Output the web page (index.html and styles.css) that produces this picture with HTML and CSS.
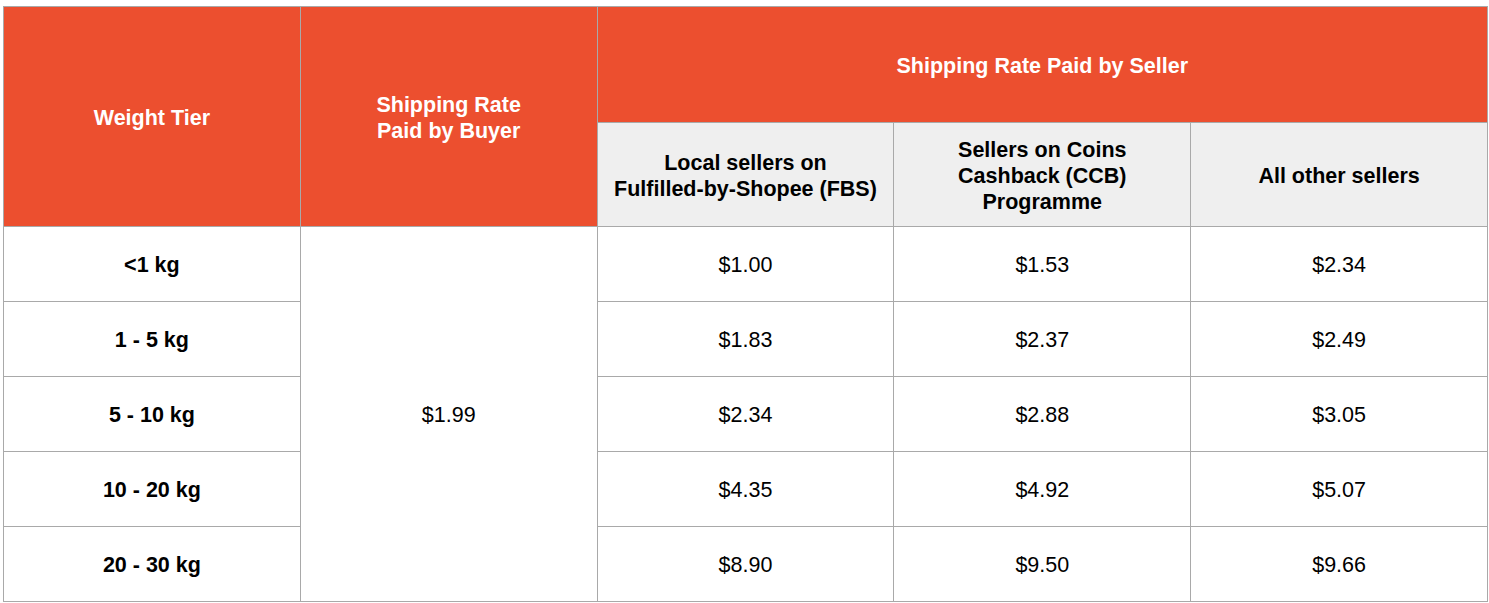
FILE: index.html
```html
<!DOCTYPE html>
<html>
<head>
<meta charset="utf-8">
<link rel="stylesheet" href="styles.css">
</head>
<body>
<table class="rates">
  <colgroup>
    <col class="c"><col class="c"><col class="c"><col class="c"><col class="c">
  </colgroup>
  <thead>
    <tr class="h1">
      <th rowspan="2" class="red">Weight Tier</th>
      <th rowspan="2" class="red">Shipping Rate<br>Paid by Buyer</th>
      <th colspan="3" class="red">Shipping Rate Paid by Seller</th>
    </tr>
    <tr class="h2">
      <th class="grey">Local sellers on<br>Fulfilled-by-Shopee (FBS)</th>
      <th class="grey">Sellers on Coins<br>Cashback (CCB)<br>Programme</th>
      <th class="grey">All other sellers</th>
    </tr>
  </thead>
  <tbody>
    <tr><td class="tier">&lt;1 kg</td><td rowspan="5">$1.99</td><td>$1.00</td><td>$1.53</td><td>$2.34</td></tr>
    <tr><td class="tier">1 - 5 kg</td><td>$1.83</td><td>$2.37</td><td>$2.49</td></tr>
    <tr><td class="tier">5 - 10 kg</td><td>$2.34</td><td>$2.88</td><td>$3.05</td></tr>
    <tr><td class="tier">10 - 20 kg</td><td>$4.35</td><td>$4.92</td><td>$5.07</td></tr>
    <tr><td class="tier">20 - 30 kg</td><td>$8.90</td><td>$9.50</td><td>$9.66</td></tr>
  </tbody>
</table>
</body>
</html>
```
FILE: styles.css
```css
html, body {
  margin: 0;
  padding: 0;
  background: #ffffff;
}
body {
  padding: 6px 0 0 3px;
  font-family: "Liberation Sans", Arial, sans-serif;
}
.rates {
  border-collapse: collapse;
  table-layout: fixed;
  width: 1485px;
  font-size: 21.5px;
  line-height: 26px;
  color: #000;
}
.rates th, .rates td {
  border: 1px solid #a9a9a9;
  text-align: center;
  vertical-align: middle;
  padding: 2px 8px 0 8px;
}
.rates th {
  font-weight: bold;
}
.red {
  background: #ec4f2f;
  color: #ffffff;
}
.grey {
  background: #efefef;
  color: #000;
}
.h1 { height: 116px; }
.h2 { height: 104px; }
.rates tbody tr { height: 75px; }
.tier { font-weight: bold; }
```
